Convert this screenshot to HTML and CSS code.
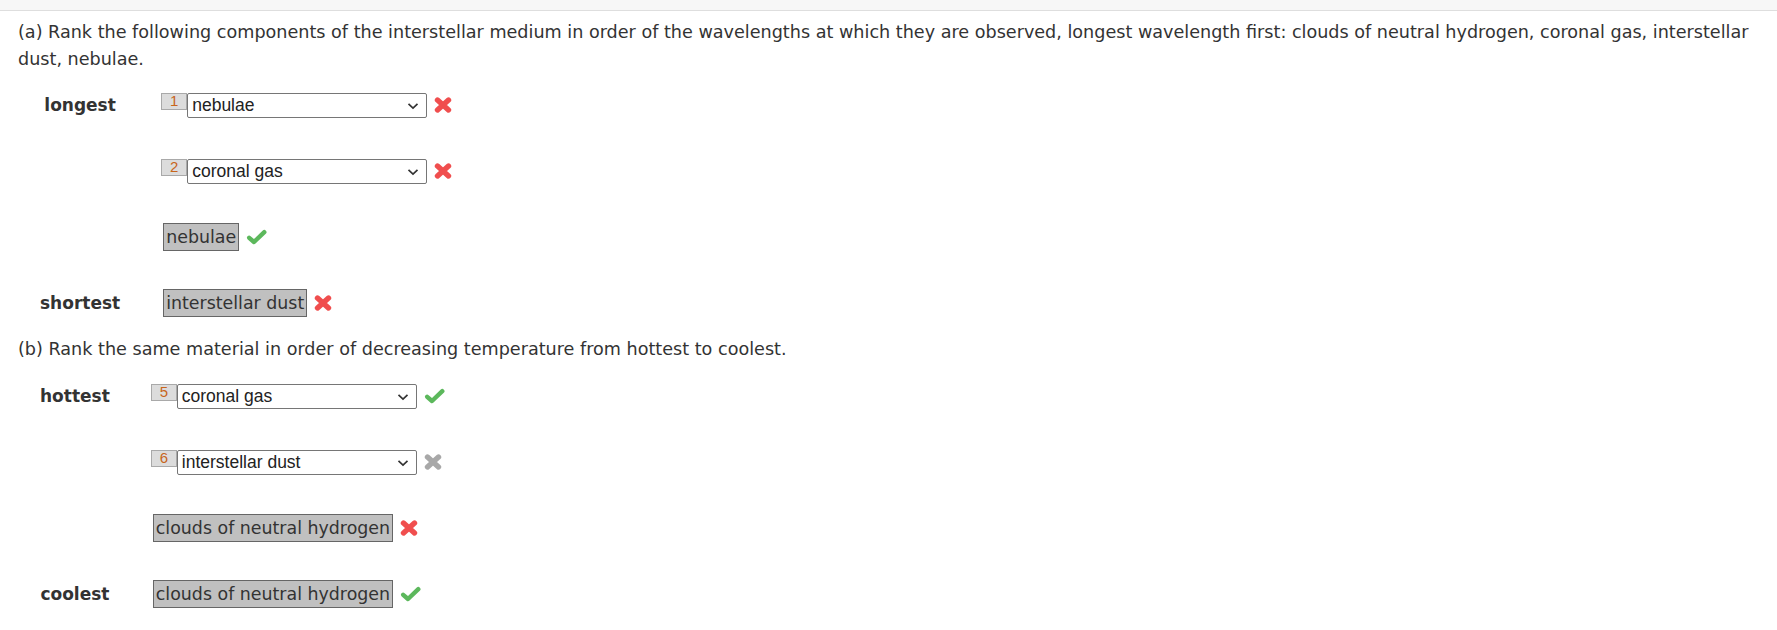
FILE: index.html
```html
<!DOCTYPE html>
<html lang="en">
<head>
<meta charset="utf-8">
<title>Ranking</title>
<link rel="stylesheet" href="styles.css">
</head>
<body>
<div class="topbar"></div>
<main class="content">
  <p class="question">(a) Rank the following components of the interstellar medium in order of the wavelengths at which they are observed, longest wavelength first: clouds of neutral hydrogen, coronal gas, interstellar dust, nebulae.</p>
  <div class="ranking">
    <div class="label">longest</div>
    <div class="item">
      <span class="pick"><span class="num">1</span><span class="select-wrap"><select class="choice"><option>nebulae</option></select><svg class="chev" viewBox="0 0 12 8" width="12" height="8"><path d="M1.5 1.8 L6 6 L10.5 1.8"/></svg></span></span>
      <svg class="icon" viewBox="0 0 20 18" width="20" height="18"><path class="x-red" d="M4.5 4 L15.5 14 M15.5 4 L4.5 14"/></svg>
    </div>
    <div class="label"></div>
    <div class="item">
      <span class="pick"><span class="num">2</span><span class="select-wrap"><select class="choice"><option>coronal gas</option></select><svg class="chev" viewBox="0 0 12 8" width="12" height="8"><path d="M1.5 1.8 L6 6 L10.5 1.8"/></svg></span></span>
      <svg class="icon" viewBox="0 0 20 18" width="20" height="18"><path class="x-red" d="M4.5 4 L15.5 14 M15.5 4 L4.5 14"/></svg>
    </div>
    <div class="label"></div>
    <div class="item">
      <span class="chip">nebulae</span>
      <svg class="icon check" viewBox="0 0 21 16" width="21" height="16"><path class="ok" d="M3.2 8.8 L8 13 L18.3 3.2"/></svg>
    </div>
    <div class="label">shortest</div>
    <div class="item">
      <span class="chip">interstellar dust</span>
      <svg class="icon" viewBox="0 0 20 18" width="20" height="18"><path class="x-red" d="M4.5 4 L15.5 14 M15.5 4 L4.5 14"/></svg>
    </div>
  </div>

  <p class="question part-b">(b) Rank the same material in order of decreasing temperature from hottest to coolest.</p>
  <div class="ranking">
    <div class="label">hottest</div>
    <div class="item">
      <span class="pick"><span class="num">5</span><span class="select-wrap"><select class="choice"><option>coronal gas</option></select><svg class="chev" viewBox="0 0 12 8" width="12" height="8"><path d="M1.5 1.8 L6 6 L10.5 1.8"/></svg></span></span>
      <svg class="icon check" viewBox="0 0 21 16" width="21" height="16"><path class="ok" d="M3.2 8.8 L8 13 L18.3 3.2"/></svg>
    </div>
    <div class="label"></div>
    <div class="item">
      <span class="pick"><span class="num">6</span><span class="select-wrap"><select class="choice"><option>interstellar dust</option></select><svg class="chev" viewBox="0 0 12 8" width="12" height="8"><path d="M1.5 1.8 L6 6 L10.5 1.8"/></svg></span></span>
      <svg class="icon" viewBox="0 0 20 18" width="20" height="18"><path class="x-gray" d="M4.5 4 L15.5 14 M15.5 4 L4.5 14"/></svg>
    </div>
    <div class="label"></div>
    <div class="item">
      <span class="chip">clouds of neutral hydrogen</span>
      <svg class="icon" viewBox="0 0 20 18" width="20" height="18"><path class="x-red" d="M4.5 4 L15.5 14 M15.5 4 L4.5 14"/></svg>
    </div>
    <div class="label">coolest</div>
    <div class="item">
      <span class="chip">clouds of neutral hydrogen</span>
      <svg class="icon check" viewBox="0 0 21 16" width="21" height="16"><path class="ok" d="M3.2 8.8 L8 13 L18.3 3.2"/></svg>
    </div>
  </div>
</main>
</body>
</html>
```

FILE: styles.css
```css
html, body {
  margin: 0;
  padding: 0;
  background: #ffffff;
}

body {
  font-family: "DejaVu Sans", Verdana, sans-serif;
  color: #333333;
}

.topbar {
  height: 10px;
  background: #f7f7f7;
  border-bottom: 1px solid #dedede;
}

.content {
  padding: 0 18px;
}

.question {
  margin: 8px 0 0 0;
  font-size: 17.6px;
  line-height: 26.7px;
}

.question.part-b {
  margin-top: 0;
}

.ranking {
  display: grid;
  grid-template-columns: auto 1fr;
  grid-auto-rows: 66px;
  align-items: center;
}

.label {
  padding: 0 41px 0 22px;
  text-align: center;
  font-weight: bold;
  font-size: 17px;
  color: #333333;
}

.item {
  display: flex;
  align-items: center;
}

.pick {
  display: flex;
  align-items: flex-start;
}

.num {
  box-sizing: border-box;
  width: 26px;
  height: 17px;
  background: #dcdcdc;
  border: 1px solid #a9a9a9;
  color: #c8651b;
  font-family: "Liberation Sans", Arial, sans-serif;
  font-size: 15px;
  line-height: 14px;
  text-align: center;
}

.select-wrap {
  position: relative;
  display: block;
}

.choice {
  display: block;
  box-sizing: border-box;
  width: 240px;
  height: 25px;
  margin: 0;
  padding: 0 0 0 4px;
  border: 1px solid #767676;
  border-radius: 2px;
  background: #ffffff;
  color: #222222;
  font-family: "Liberation Sans", Arial, sans-serif;
  font-size: 17.5px;
  -webkit-appearance: none;
  appearance: none;
}

.chev {
  position: absolute;
  right: 8px;
  top: 9px;
  pointer-events: none;
}

.chev path {
  fill: none;
  stroke: #333333;
  stroke-width: 1.7;
}

.chip {
  margin-left: 2px;
  padding: 1px 2px;
  background: #c0c0c0;
  border: 1px solid #666666;
  color: #333333;
  font-size: 17.4px;
  line-height: 24px;
  white-space: nowrap;
}

.icon {
  margin-left: 6px;
  flex: none;
}

.icon.check {
  margin-left: 7px;
}

.x-red {
  fill: none;
  stroke: #f04e4e;
  stroke-width: 5.4;
  stroke-linecap: round;
}

.x-gray {
  fill: none;
  stroke: #a8a8a8;
  stroke-width: 5.4;
  stroke-linecap: round;
}

.ok {
  fill: none;
  stroke: #5cb85c;
  stroke-width: 4.4;
  stroke-linecap: round;
  stroke-linejoin: round;
}
```
